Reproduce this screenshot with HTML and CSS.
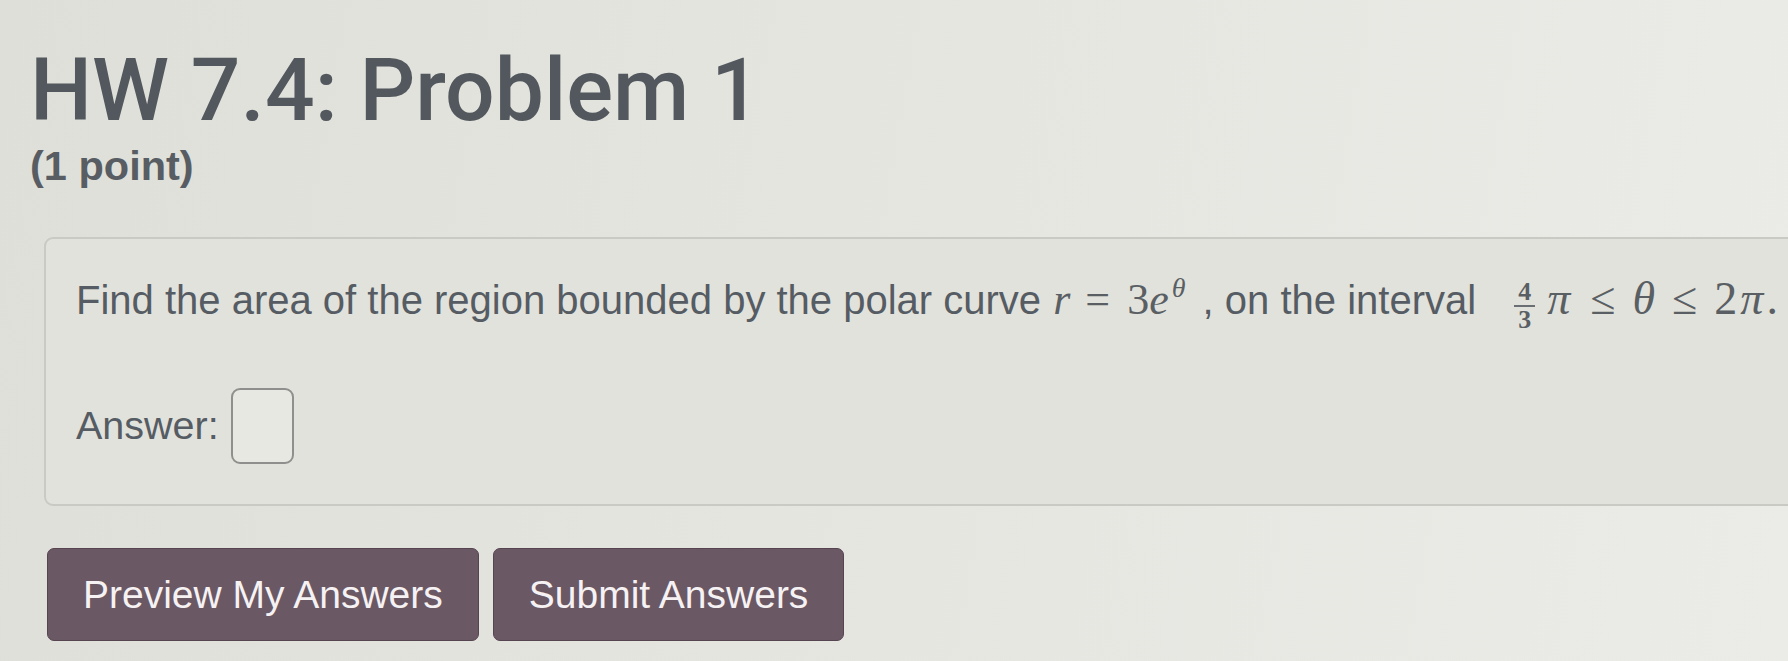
FILE: index.html
```html
<!DOCTYPE html>
<html lang="en">
<head>
<meta charset="utf-8">
<title>HW 7.4: Problem 1</title>
<link rel="stylesheet" href="styles.css">
</head>
<body>
<main class="page">
  <header class="header">
    <h1 class="title">HW 7.4: Problem 1</h1>
    <div class="points">(1 point)</div>
  </header>

  <section class="problem">
    <p class="statement">Find the area of the region bounded by the polar curve <span class="math math-a"><i class="mi">r</i><span class="rel">=</span><span class="mn">3</span><i class="mi">e</i><span class="sup"><i class="mi">θ</i></span></span> , on the interval <span class="math math-b"><span class="frac"><span class="num">4</span><span class="bar"></span><span class="den">3</span></span><i class="mi pi">π</i><span class="rel">≤</span><i class="mi">θ</i><span class="rel">≤</span><span class="mn">2</span><i class="mi pi">π</i>.</span></p>
    <div class="answer-row">
      <span class="answer-label">Answer:</span>
      <span class="answer-box"></span>
    </div>
  </section>

  <div class="actions">
    <button class="btn" type="button">Preview My Answers</button>
    <button class="btn" type="button">Submit Answers</button>
  </div>
</main>
</body>
</html>
```

FILE: styles.css
```css
html, body {
  margin: 0;
  padding: 0;
  height: 100%;
  overflow: hidden;
}

body {
  background: linear-gradient(100deg, #dedfd9 0%, #e5e5e0 45%, #ebebe7 100%);
  font-family: "Liberation Sans", Arial, sans-serif;
  color: #565c62;
}

.page {
  padding-top: 47px;
}

.header {
  padding-left: 30px;
}

.title {
  margin: 0;
  font-family: Roboto, "Liberation Sans", Arial, sans-serif;
  font-size: 87.5px;
  line-height: 1;
  font-weight: 500;
  color: #52585d;
}

.points {
  margin-top: 10px;
  font-size: 41.5px;
  line-height: 1;
  font-weight: 700;
  color: #575d62;
}

.problem {
  margin-top: 51px;
  margin-left: 44px;
  margin-right: -30px;
  padding: 41px 30px 40px 30px;
  border: 2px solid #cacac4;
  border-radius: 9px;
  background: #e2e2dc;
}

.statement {
  margin: 0;
  font-size: 40px;
  line-height: 1;
  color: #565c63;
  white-space: nowrap;
}

.math {
  font-family: "Liberation Serif", "Times New Roman", serif;
  line-height: 0;
  color: #5a5f64;
}

.math-a {
  font-size: 44px;
  margin-left: 1px;
}

.math-b {
  font-size: 46px;
  margin-left: 27px;
}

.mi {
  font-style: italic;
}

.pi {
  margin: 0 3px;
}

.math-a .rel {
  padding: 0 17px 0 15px;
}

.math-b .rel {
  padding: 0 17px;
}

.sup {
  display: inline-block;
  font-size: 28px;
  line-height: 1;
  vertical-align: 17px;
  margin: -20px 6px -20px 3px;
}

.frac {
  display: inline-flex;
  flex-direction: column;
  align-items: center;
  font-size: 26px;
  line-height: 1;
  vertical-align: 14px;
  margin: -16px 9px -16px 0;
  font-weight: 700;
}

.bar {
  width: 21px;
  height: 2px;
  margin: 0;
  background: #6a6f74;
}

.answer-row {
  margin-top: 68px;
  display: flex;
  align-items: center;
  gap: 12px;
}

.answer-label {
  font-size: 39.5px;
  line-height: 1;
  color: #565c63;
}

.answer-box {
  width: 59px;
  height: 72px;
  border: 2px solid #8f8f8d;
  border-radius: 9px;
  background: #e8e8e3;
}

.actions {
  margin-top: 42px;
  margin-left: 47px;
  display: flex;
  gap: 14px;
}

.btn {
  font-family: "Liberation Sans", Arial, sans-serif;
  font-size: 39px;
  line-height: 1;
  color: #f6f2f3;
  background: #6b5865;
  border: 1px solid #574451;
  border-radius: 7px;
  padding: 26px 35px;
  cursor: pointer;
}
```
